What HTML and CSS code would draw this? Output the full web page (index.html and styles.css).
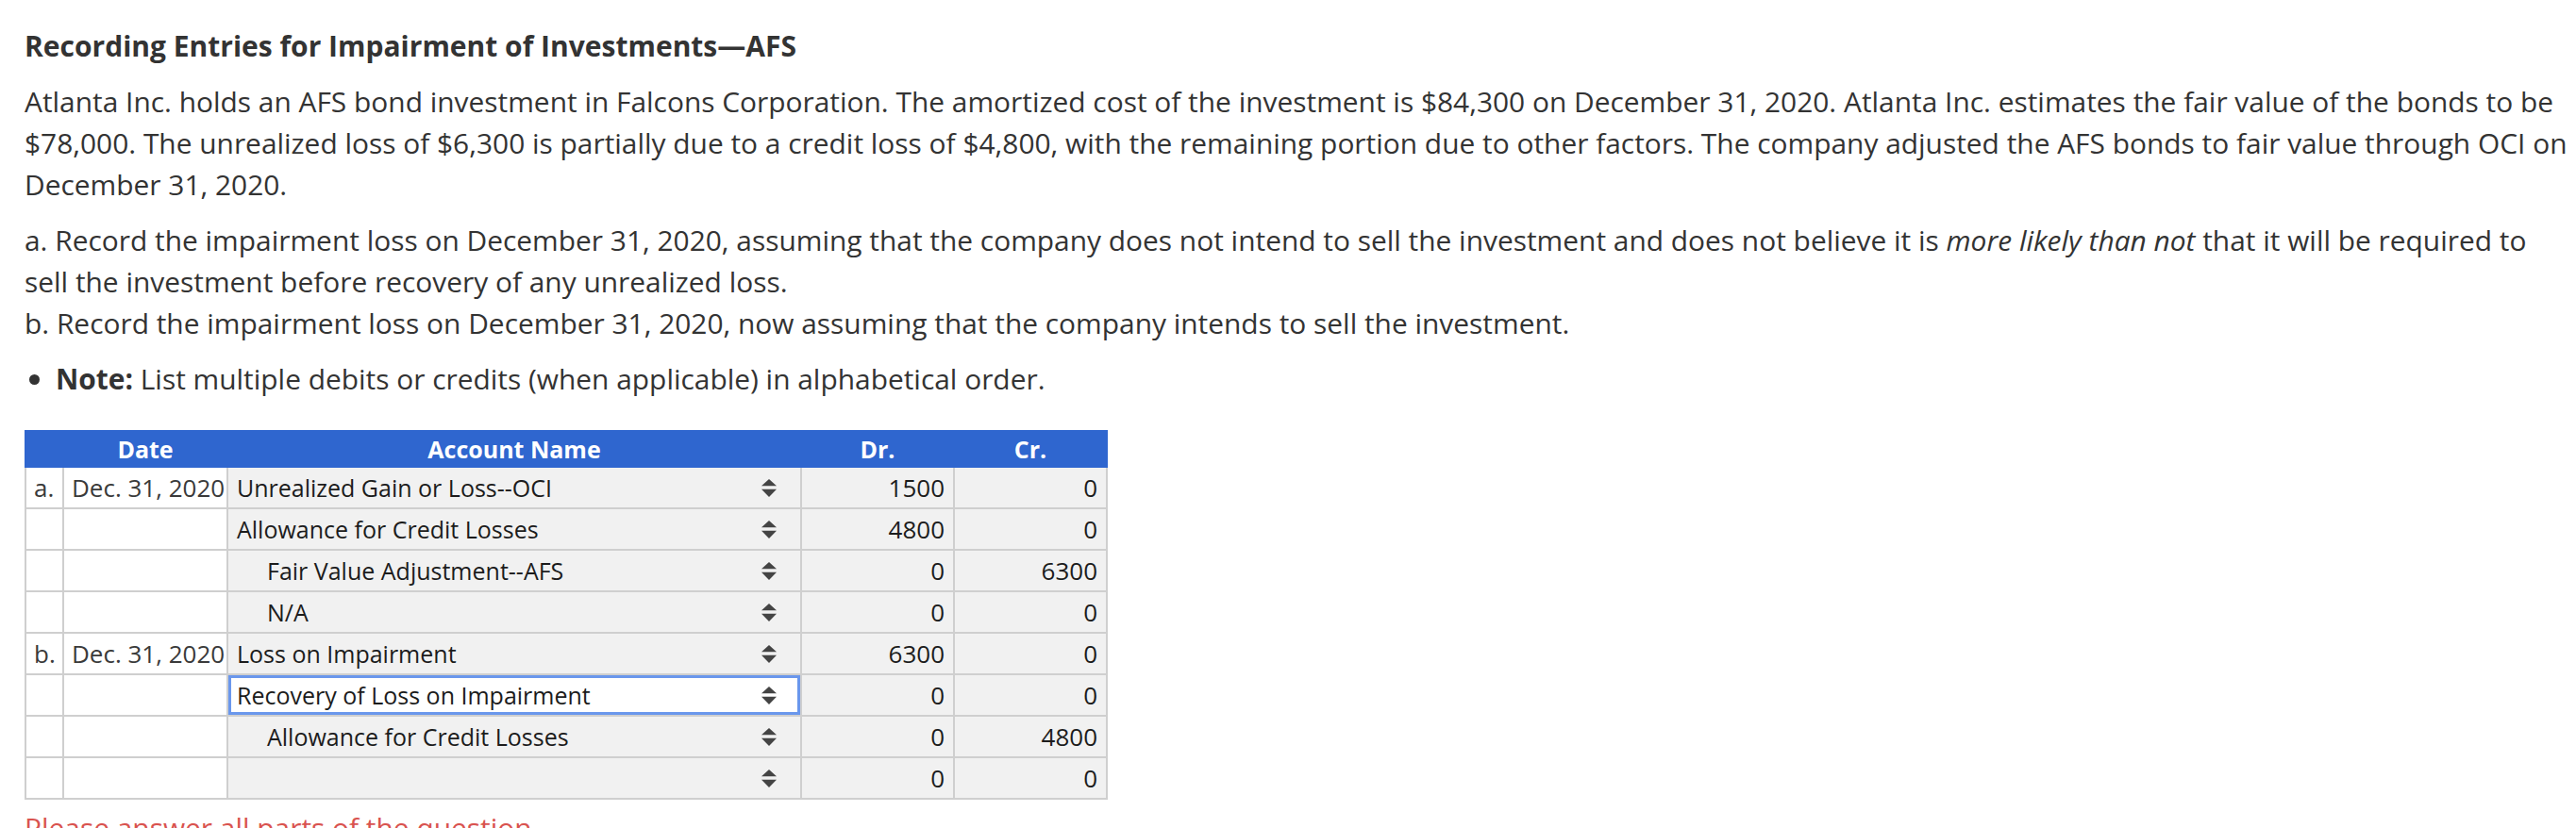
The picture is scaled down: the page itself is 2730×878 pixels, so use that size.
FILE: index.html
```html
<!DOCTYPE html>
<html lang="en">
<head>
<meta charset="utf-8">
<title>Recording Entries for Impairment of Investments—AFS</title>
<link rel="stylesheet" href="styles.css">
</head>
<body>
<div class="page">
  <h1 class="title">Recording Entries for Impairment of Investments—AFS</h1>
  <p class="para">Atlanta Inc. holds an AFS bond investment in Falcons Corporation. The amortized cost of the investment is $84,300 on December 31, 2020. Atlanta Inc. estimates the fair value of the bonds to be $78,000. The unrealized loss of $6,300 is partially due to a credit loss of $4,800, with the remaining portion due to other factors. The company adjusted the AFS bonds to fair value through OCI on December 31, 2020.</p>
  <p class="para">a. Record the impairment loss on December 31, 2020, assuming that the company does not intend to sell the investment and does not believe it is <em>more likely than not</em> that it will be required to sell the investment before recovery of any unrealized loss.<br>b. Record the impairment loss on December 31, 2020, now assuming that the company intends to sell the investment.</p>
  <ul class="notes">
    <li><strong>Note:</strong> List multiple debits or credits (when applicable) in alphabetical order.</li>
  </ul>

  <table class="journal">
    <colgroup>
      <col class="c-letter">
      <col class="c-date">
      <col class="c-acct">
      <col class="c-amt">
      <col class="c-amt">
    </colgroup>
    <thead>
      <tr>
        <th></th>
        <th>Date</th>
        <th>Account Name</th>
        <th>Dr.</th>
        <th>Cr.</th>
      </tr>
    </thead>
    <tbody>
      <tr>
        <td class="letter">a.</td>
        <td class="date">Dec. 31, 2020</td>
        <td class="acct"><div class="select"><span class="opt">Unrealized Gain or Loss--OCI</span><svg class="arrows" viewBox="0 0 16 19" width="16" height="19"><path d="M0 7.3L8 0L16 7.3Z M0 10.7L16 10.7L8 19Z"/></svg></div></td>
        <td class="amt">1500</td>
        <td class="amt">0</td>
      </tr>
      <tr>
        <td class="letter"></td>
        <td class="date"></td>
        <td class="acct"><div class="select"><span class="opt">Allowance for Credit Losses</span><svg class="arrows" viewBox="0 0 16 19" width="16" height="19"><path d="M0 7.3L8 0L16 7.3Z M0 10.7L16 10.7L8 19Z"/></svg></div></td>
        <td class="amt">4800</td>
        <td class="amt">0</td>
      </tr>
      <tr>
        <td class="letter"></td>
        <td class="date"></td>
        <td class="acct"><div class="select"><span class="opt indent">Fair Value Adjustment--AFS</span><svg class="arrows" viewBox="0 0 16 19" width="16" height="19"><path d="M0 7.3L8 0L16 7.3Z M0 10.7L16 10.7L8 19Z"/></svg></div></td>
        <td class="amt">0</td>
        <td class="amt">6300</td>
      </tr>
      <tr>
        <td class="letter"></td>
        <td class="date"></td>
        <td class="acct"><div class="select"><span class="opt indent">N/A</span><svg class="arrows" viewBox="0 0 16 19" width="16" height="19"><path d="M0 7.3L8 0L16 7.3Z M0 10.7L16 10.7L8 19Z"/></svg></div></td>
        <td class="amt">0</td>
        <td class="amt">0</td>
      </tr>
      <tr>
        <td class="letter">b.</td>
        <td class="date">Dec. 31, 2020</td>
        <td class="acct"><div class="select"><span class="opt">Loss on Impairment</span><svg class="arrows" viewBox="0 0 16 19" width="16" height="19"><path d="M0 7.3L8 0L16 7.3Z M0 10.7L16 10.7L8 19Z"/></svg></div></td>
        <td class="amt">6300</td>
        <td class="amt">0</td>
      </tr>
      <tr>
        <td class="letter"></td>
        <td class="date"></td>
        <td class="acct"><div class="select focused"><span class="opt">Recovery of Loss on Impairment</span><svg class="arrows" viewBox="0 0 16 19" width="16" height="19"><path d="M0 7.3L8 0L16 7.3Z M0 10.7L16 10.7L8 19Z"/></svg></div></td>
        <td class="amt">0</td>
        <td class="amt">0</td>
      </tr>
      <tr>
        <td class="letter"></td>
        <td class="date"></td>
        <td class="acct"><div class="select"><span class="opt indent">Allowance for Credit Losses</span><svg class="arrows" viewBox="0 0 16 19" width="16" height="19"><path d="M0 7.3L8 0L16 7.3Z M0 10.7L16 10.7L8 19Z"/></svg></div></td>
        <td class="amt">0</td>
        <td class="amt">4800</td>
      </tr>
      <tr>
        <td class="letter"></td>
        <td class="date"></td>
        <td class="acct"><div class="select"><span class="opt indent"></span><svg class="arrows" viewBox="0 0 16 19" width="16" height="19"><path d="M0 7.3L8 0L16 7.3Z M0 10.7L16 10.7L8 19Z"/></svg></div></td>
        <td class="amt">0</td>
        <td class="amt">0</td>
      </tr>
    </tbody>
  </table>

  <p class="warning">Please answer all parts of the question.</p>
</div>
</body>
</html>
```

FILE: styles.css
```css
html, body {
  margin: 0;
  padding: 0;
  background: #ffffff;
}

body {
  font-family: "Open Sans", "Liberation Sans", sans-serif;
  color: #333333;
  font-size: 29.9px;
  line-height: 44px;
}

.page {
  padding: 27px 0 0 26px;
}

.title {
  margin: 0;
  font-size: 30px;
  line-height: 44px;
  font-weight: 700;
  color: #333333;
}

.para {
  margin: 15px 0 0 0;
}

.notes {
  margin: 15px 0 0 0;
  padding: 0 0 0 33px;
}

.notes strong {
  font-weight: 700;
}

.journal {
  margin-top: 32px;
  border-collapse: separate;
  border-spacing: 0;
  table-layout: fixed;
  width: 1148px;
  font-size: 26px;
  line-height: 42px;
}

.c-letter { width: 42px; }
.c-date { width: 174px; }
.c-acct { width: 608px; }
.c-amt { width: 162px; }

.journal th {
  background: #2f66cf;
  color: #ffffff;
  font-weight: 700;
  font-size: 25px;
  height: 40px;
  line-height: 40px;
  padding: 0;
  text-align: center;
  border-right: 2px solid #2f66cf;
}

.journal th:first-child {
  border-left: 2px solid #2f66cf;
}

.journal td {
  padding: 0 8px;
  border-right: 2px solid #cfcfcf;
  border-bottom: 2px solid #cfcfcf;
  height: 42px;
  white-space: nowrap;
  overflow: hidden;
}

.journal td:first-child {
  border-left: 2px solid #cfcfcf;
}

.journal td.letter,
.journal td.date {
  background: #ffffff;
  color: #3a3a3a;
}

.journal td.acct {
  padding: 0;
  background: #f1f1f1;
}

.journal td.amt {
  background: #f1f1f1;
  color: #1c1c1c;
  text-align: right;
  padding-right: 9px;
}

.select {
  display: flex;
  align-items: center;
  justify-content: space-between;
  height: 42px;
  box-sizing: border-box;
  border: 3px solid transparent;
  padding: 0 22px 0 6px;
  color: #1c1c1c;
  font-size: 25px;
}

.select.focused {
  background: #ffffff;
  border-color: #6a97ec;
}

.opt.indent {
  padding-left: 32px;
}

.arrows {
  flex: none;
  fill: #444444;
}

.warning {
  margin: 8px 0 0 0;
  color: #d9534f;
}
```
